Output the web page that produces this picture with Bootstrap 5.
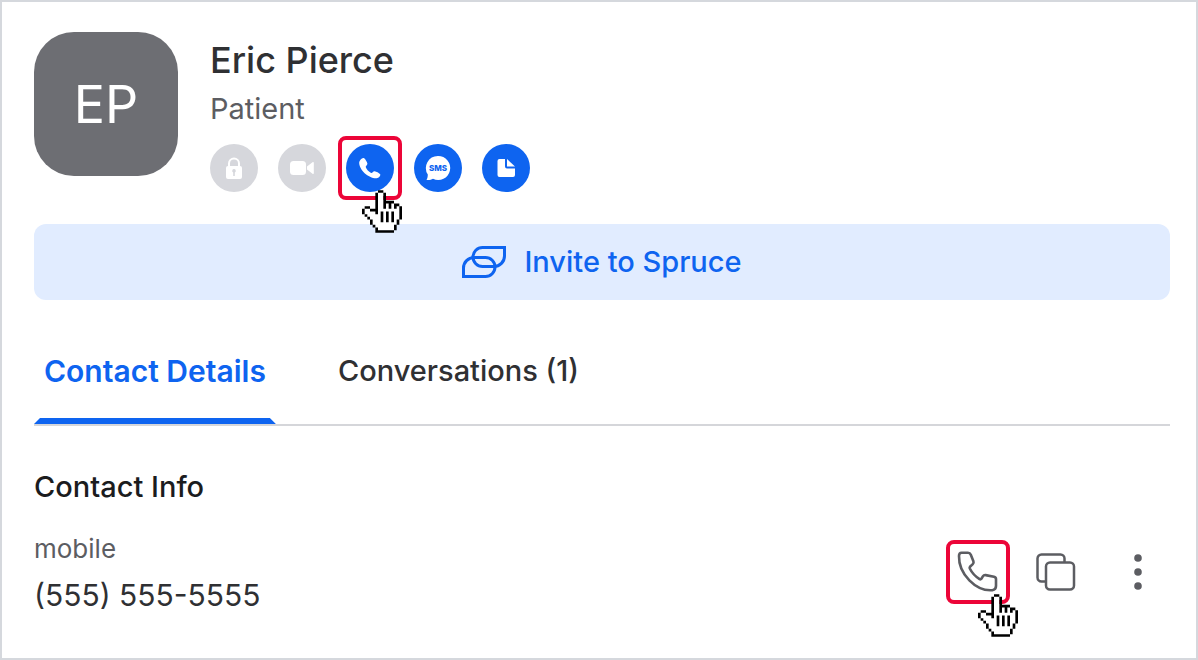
<!DOCTYPE html>
<html lang="en">
<head>
<meta charset="utf-8">
<meta name="viewport" content="width=device-width, initial-scale=1">
<title>Eric Pierce</title>
<link href="https://cdn.jsdelivr.net/npm/bootstrap@5.3.0/dist/css/bootstrap.min.css" rel="stylesheet">
<style>
  body { font-family: Inter, "Liberation Sans", sans-serif; color: #2f3033; font-size: 30px; line-height: 40px; }
  .panel { min-height: 100vh; border: 2px solid #d5d8dd; padding: 30px 26px 20px 32px; }
  .avatar { width: 144px; height: 144px; border-radius: 40px; background: #6d6e73; color: #fff; font-size: 52px; padding-top: 2px; }
  .person-name { font-size: 36px; line-height: 56px; font-weight: 500; }
  .muted { color: #5c5d62; }
  .role { font-size: 29px; line-height: 42px; }
  .actions { gap: 20px; margin-top: 14px; }
  .round { width: 48px; height: 48px; border-radius: 50%; background: #0e64f0; color: #fff; }
  .round:disabled { background: #d6d7dc; opacity: 1; color: #fff; }
  .spot { position: relative; }
  .spot::before { content: ""; position: absolute; inset: -8px; border: 4px solid #ec0538; border-radius: 8px; }
  .spot .hand { position: absolute; left: 16px; top: 46px; z-index: 2; }
  .tool + .hand { left: 24px; }
  .invite { margin-top: 32px; height: 76px; border-radius: 12px; background: #e1ecff; color: #0e64f0; font-size: 29px; font-weight: 500; gap: 18px; }
  .invite:hover { background: #d5e4ff; color: #0e64f0; }
  .tabs { margin-top: 48px; border-bottom: 2px solid #d5d6da; gap: 52px; }
  .tabs .nav-link { position: relative; padding: 3px 10px 33px; color: #2f3033; font-size: 29px; line-height: 40px; font-weight: 500; }
  .tabs .nav-link.active { color: #0e64f0; font-size: 30px; font-weight: 600; }
  .tabs .nav-link.active::after { content: ""; position: absolute; inset: auto 0 0 0; height: 6px; background: #0e64f0; clip-path: polygon(6px 0, calc(100% - 6px) 0, 100% 100%, 0 100%); }
  .section-title { margin: 41px 0 22px; font-size: 29px; line-height: 40px; font-weight: 500; color: #1b1c1e; }
  .kind { font-size: 26px; line-height: 40px; margin-bottom: 6px; }
  .tool { width: 48px; height: 48px; color: #5c5d62; }
  .tools { gap: 32px; padding-right: 8px; }
</style>
</head>
<body>
<svg width="0" height="0" class="position-absolute" aria-hidden="true">
  <symbol id="hand" viewBox="0 0 15 16">
    <path fill="#fff" d="M6 1h2v4h4v1h1v1h1v4h-1v2h-1v2H6v-1H5v-1H4v-2H3v-1H2V9H1V7h2v1h3z"/>
    <path fill="#000" d="M6 0h2v1H6zM5 1h1v8H5zM8 1h1v6H8zM9 4h3v1H9zM10 5h1v2h-1zM12 5h2v1h-1v1h-1zM14 6h1v5h-1zM1 6h2v1H1zM0 7h1v2H0zM3 7h2v1H3zM1 9h1v1H1zM2 10h1v1H2zM3 11h1v2H3zM4 13h1v1H4zM5 14h1v1h6v1H5zM12 13h1v2h-1zM13 11h1v2h-1zM7 8h1v4H7zM9 8h1v4H9zM11 8h1v4h-1z"/>
  </symbol>
</svg>
<main class="panel">
  <header class="d-flex">
    <div class="avatar d-flex align-items-center justify-content-center flex-shrink-0">EP</div>
    <div class="ms-4 ps-2">
      <h1 class="person-name mb-0">Eric Pierce</h1>
      <p class="role muted mb-0">Patient</p>
      <div class="actions d-flex">
        <button class="btn round p-0 border-0 d-flex" disabled aria-label="Secure message">
          <svg width="48" height="48" fill="none"><rect x="16" y="22" width="16" height="13" rx="2" fill="currentColor"/><path d="M19 23v-3.500a5 5 0 0 1 10 0V23" stroke="currentColor" stroke-width="2"/><path d="M24 25a1.800 1.800 0 0 0-.8 3.400V32h1.600v-3.600A1.800 1.800 0 0 0 24 25z" fill="#d6d7dc"/></svg>
        </button>
        <button class="btn round p-0 border-0 d-flex" disabled aria-label="Video call">
          <svg width="48" height="48" fill="currentColor"><rect x="12" y="17" width="16" height="14" rx="3.500"/><path d="M29 22.500l5.500-4.300c.8-.5 1.300-.2 1.300.5v10.600c0 .7-.5 1-1.300.5L29 25.500z"/></svg>
        </button>
        <div class="spot">
          <button class="btn round p-0 border-0 d-flex" aria-label="Call">
            <svg width="48" height="48" fill="currentColor"><path d="M14 16.500c1-1.800 2.700-2.700 4.200-2.300 1.400 1.300 2.600 3.300 3.200 5.300.2 1.700-1.900 2.300-1.700 3.400.8 2.400 3 4.700 5.400 6 1.300.4 1.800-1.900 3.500-1.700 2 .3 4.100 1.500 5.600 3 .6 1.500-1.400 3.600-3.500 4.100C23 34.800 13 26 13.200 18.500c0-.8.400-1.400.8-2z"/></svg>
          </button>
          <svg class="hand" width="40" height="43" aria-hidden="true"><use href="#hand"/></svg>
        </div>
        <button class="btn round p-0 border-0 d-flex" aria-label="Text message">
          <svg width="48" height="48"><path d="M24 12a12 12 0 1 1-5 22.800c-1.800 1.200-4 1.400-6.500 1.200.9-1.500 1.300-3.200 1.300-5.500A12 12 0 0 1 24 12z" fill="#fff"/><text x="24" y="27" text-anchor="middle" font-size="8" font-weight="800" fill="#0e64f0">SMS</text></svg>
        </button>
        <button class="btn round p-0 border-0 d-flex" aria-label="Add note">
          <svg width="48" height="48" fill="currentColor"><path d="M17.500 15H23v7.500a2 2 0 0 0 2 2h8V31a2 2 0 0 1-2 2H17.500a2 2 0 0 1-2-2V17a2 2 0 0 1 2-2z"/><path d="M25 15l8 7.500h-8z"/></svg>
        </button>
      </div>
    </div>
  </header>

  <button class="invite btn border-0 w-100 d-flex align-items-center justify-content-center">
    <svg width="44" height="32" fill="none" stroke="currentColor" stroke-width="3" aria-hidden="true"><path d="M20.500 1.500h22v8.500A10.500 10.500 0 0 1 32 20.500H20.500a9.500 9.500 0 0 1 0-19z"/><path d="M23.500 30.500h-22V22A10.500 10.500 0 0 1 12 11.500h11.500a9.500 9.500 0 0 1 0 19z"/></svg>
    <span>Invite to Spruce</span>
  </button>

  <nav class="tabs nav">
    <a class="nav-link active" aria-current="page" href="#details">Contact Details</a>
    <a class="nav-link" href="#conversations">Conversations (1)</a>
  </nav>

  <section id="details">
    <h2 class="section-title">Contact Info</h2>
    <div class="d-flex justify-content-between">
      <div>
        <div class="kind muted">mobile</div>
        <div class="phone">(555) 555-5555</div>
      </div>
      <div class="tools d-flex align-items-center">
        <div class="spot">
          <button class="tool btn p-0 border-0 d-flex" aria-label="Call mobile"><svg width="48" height="48" fill="none" stroke="currentColor" stroke-width="2.600" stroke-linejoin="round"><path d="M7.500 4.800h6.500q2 0 2.800 2l2.600 6.500q.6 1.700-.6 2.800l-2.800 2.600q-.6.8-.2 1.800 3.200 6.500 9.800 10.600 1 .6 1.800-.4l1.600-2.600q.8-1.200 2.600-1l8.400 1.600q2 .5 2 2.400v7q0 3.600-3.600 4.100C22 43.500 4.500 26 5 8q0-3.200 2.500-3.200z"/></svg></button>
          <svg class="hand" width="40" height="43" aria-hidden="true"><use href="#hand"/></svg>
        </div>
        <button class="tool btn p-0 border-0 d-flex" aria-label="Copy number"><svg width="48" height="48" fill="none" stroke="currentColor" stroke-width="2.500"><path d="M12 33.500H7.500a4 4 0 0 1-4-4v-19a4 4 0 0 1 4-4h19a4 4 0 0 1 4 4V14"/><rect x="12" y="14.500" width="28" height="27" rx="4"/></svg></button>
        <button class="tool btn p-0 border-0 d-flex" aria-label="More options"><svg width="48" height="48" fill="currentColor"><circle cx="24" cy="10" r="3.800"/><circle cx="24" cy="24" r="3.800"/><circle cx="24" cy="38" r="3.800"/></svg></button>
      </div>
    </div>
  </section>
</main>
<script src="https://cdn.jsdelivr.net/npm/bootstrap@5.3.0/dist/js/bootstrap.bundle.min.js"></script>
</body>
</html>
